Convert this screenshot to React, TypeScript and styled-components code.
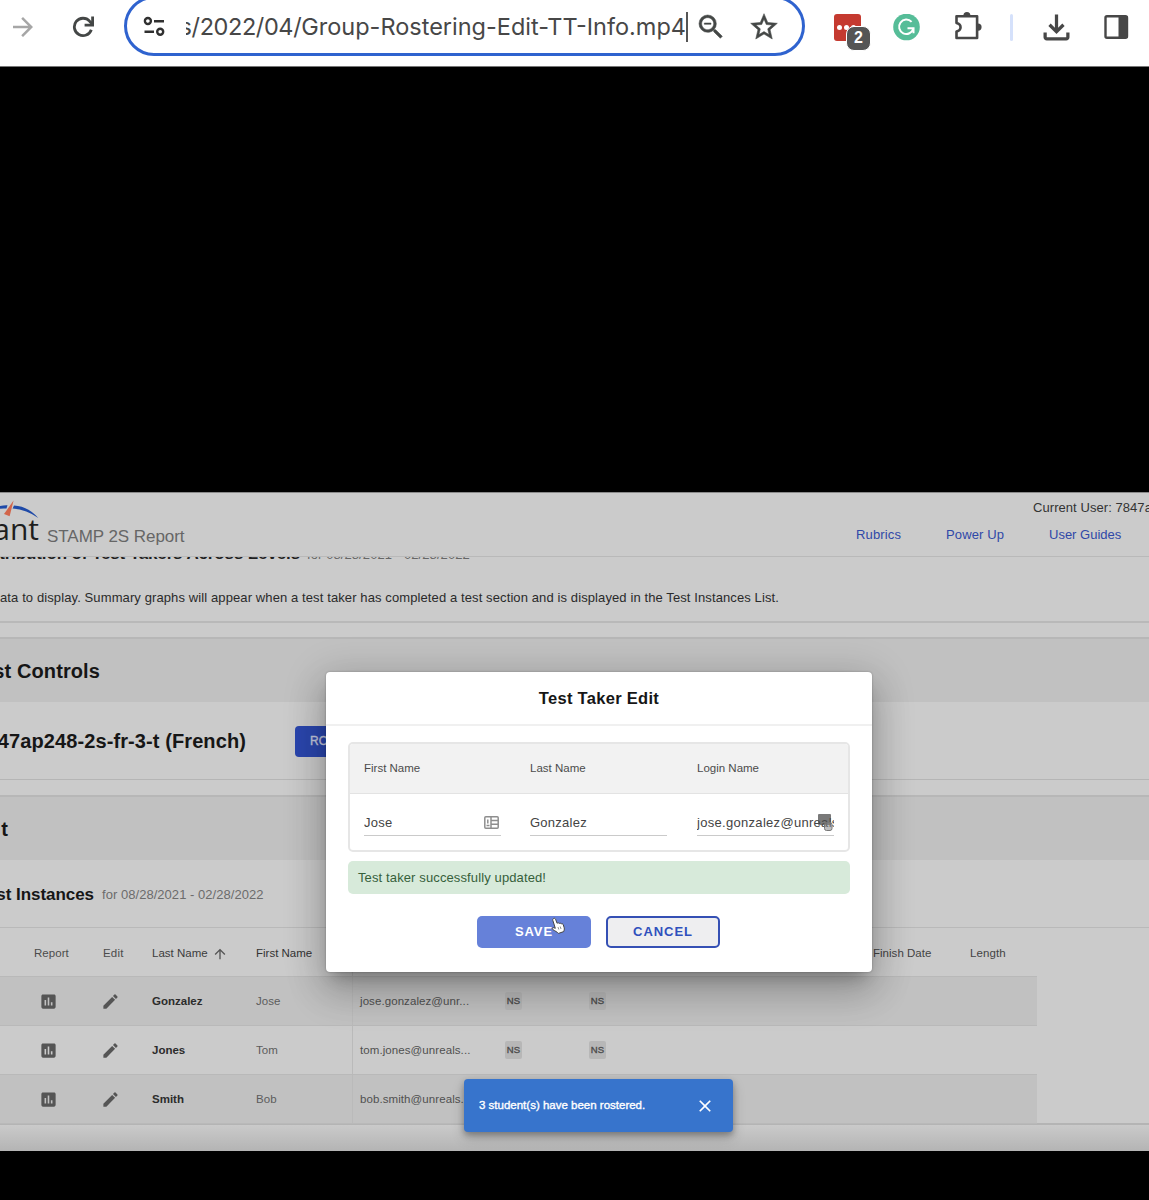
import React from "react";
import styled, { createGlobalStyle } from "styled-components";
import { MdArrowForward, MdArrowUpward, MdAssessment, MdClose, MdEdit, MdOutlineFileDownload, MdStarBorder, MdZoomOut } from "react-icons/md";

const Global = createGlobalStyle`
  *{box-sizing:border-box}
  body{margin:0;background:#000;overflow:hidden;font-family:"Liberation Sans",Arial,sans-serif}
`;
const Page = styled.div`width:1149px;height:1200px;display:flex;flex-direction:column;background:#000;overflow:hidden;`;
const Text = styled.span<{ $s: number; $c?: string; $b?: boolean; $ls?: number; $m?: boolean }>`
  font-size:${p => p.$s}px;color:${p => p.$c || "#1f1f1f"};font-weight:${p => (p.$b ? 700 : 400)};
  letter-spacing:${p => p.$ls || 0}px;white-space:nowrap;line-height:1.2;flex:none;
  ${p => (p.$m ? "-webkit-text-stroke:0.35px currentColor;" : "")}
`;

const Toolbar = styled.header`height:67px;flex:none;background:#fff;border-bottom:1px solid #777;display:flex;align-items:flex-start;`;
const NavIcon = styled.div<{ $w: number; $c?: string; $pl: number }>`
  width:${p => p.$w}px;padding-left:${p => p.$pl}px;height:54px;display:flex;align-items:center;color:${p => p.$c || "inherit"};flex:none;
  svg{display:block;flex:none}
`;
const Omnibox = styled.div`
  width:681px;height:60px;margin-top:-4px;flex:none;border:3px solid #2f63cf;border-radius:30px;display:flex;align-items:center;
  color:#444746;padding:1px 0 0 16px;
  svg{display:block;flex:none}
`;
const Url = styled.div`
  width:502px;margin-left:21px;height:30px;display:flex;justify-content:flex-end;align-items:center;overflow:hidden;border-right:2px solid #555;
  padding-top:1px;
  span{font-family:Inter,sans-serif}
`;
const UrlPath = styled.span`letter-spacing:-0.4px;`;
const OmniIcons = styled.div`
  display:flex;align-items:center;gap:21px;margin-left:7px;
  svg path:not([fill="none"]){stroke:currentColor;stroke-width:.4}
`;
const Ext = styled.div`display:flex;align-items:center;height:54px;color:#474747;svg{display:block;flex:none}`;
const PassBox = styled.div`position:relative;width:27px;height:27px;margin-left:29px;background:#c53a30;border-radius:3px;display:flex;align-items:center;padding-left:3px;gap:2px;`;
const Dot = styled.i`width:5px;height:5px;border-radius:50%;background:#fff;`;
const Count = styled.div`position:absolute;left:12px;top:12px;width:25px;height:25px;border-radius:8px;background:#555;border:1px solid #fff;display:flex;align-items:center;justify-content:center;`;
const ExtDivider = styled.i`width:3px;height:27px;border-radius:2px;background:#d5e1fb;margin:0 23.5px 0 28px;`;

const Stage = styled.main`height:425px;flex:none;`;
const Video = styled.section`position:relative;height:659px;flex:none;background:#cbcbcb;overflow:hidden;display:flex;flex-direction:column;`;
const Head = styled.div`height:65px;flex:none;border-top:1px solid #8a8a8a;border-bottom:1px solid #b9b9b9;display:flex;justify-content:space-between;`;
const Brand = styled.div`display:flex;svg{display:block}`;
const LogoBox = styled.div`width:47px;height:60px;position:relative;overflow:hidden;`;
const LogoText = styled.div`position:absolute;right:8px;top:18px;span{font-family:"Open Sans",sans-serif;font-weight:400}`;
const BrandTitle = styled.div`padding-top:34px;`;
const HeadRight = styled.div`width:293px;display:flex;flex-direction:column;`;
const UserLine = styled.div`padding:5px 0 0 177px;height:32px;`;
const Links = styled.nav`display:flex;`;
const LinkItem = styled.a<{ $w: number }>`width:${p => p.$w}px;flex:none;`;

const Hidden = styled.div`height:66px;flex:none;overflow:hidden;border-bottom:2px solid #b9b9b9;display:flex;flex-direction:column;justify-content:space-between;padding-bottom:15px;`;
const Clipped = styled.div`height:3px;display:flex;align-items:flex-end;overflow:hidden;`;
const ClipBold = styled.div`width:300px;display:flex;justify-content:flex-end;margin-bottom:-4px;`;
const ClipThin = styled.div`margin:0 0 -3px 7px;display:flex;`;
const RightEdge = styled.div<{ $w: number }>`width:${p => p.$w}px;display:flex;justify-content:flex-end;flex:none;`;
const Band = styled.div<{ $mt: number }>`height:65px;margin-top:${p => p.$mt}px;flex:none;background:#c1c1c1;border-top:2px solid #b7b7b7;display:flex;align-items:center;`;
const Course = styled.div`height:78px;flex:none;border-bottom:1px solid #b5b5b5;display:flex;align-items:center;`;
const RosterBtn = styled.div`margin:1px 0 0 49px;width:110px;height:31px;background:#2a46ad;border-radius:4px;display:flex;align-items:center;padding-left:15px;`;
const Instances = styled.div`height:68px;flex:none;border-bottom:1px solid #b9b9b9;display:flex;align-items:center;gap:8px;padding-top:3px;`;

const Table = styled.div`display:flex;flex-direction:column;flex:none;border-bottom:2px solid #b4b4b4;height:197px;`;
const Row = styled.div<{ $h: number; $alt?: boolean }>`
  width:1037px;height:${p => p.$h}px;flex:none;background:${p => (p.$alt ? "#c1c1c1" : "transparent")};border-bottom:1px solid #b9b9b9;
  display:grid;grid-template-columns:103px 49px 104px 96px 153px 84px 284px 97px 67px;align-items:center;color:#555;
`;
const Cell = styled.div<{ $pl?: number; $pt?: number; $line?: boolean }>`
  height:100%;display:flex;align-items:center;gap:4px;padding:${p => p.$pt || 0}px 0 0 ${p => p.$pl || 0}px;${p => (p.$line ? "border-left:1px solid #bababa;" : "")}
  svg{display:block;flex:none}
`;
const EditMark = styled.div`margin-left:-2px;`;
const Ns = styled.div`width:17px;height:18px;border-radius:2px;background:#b7b7b7;display:flex;align-items:center;justify-content:center;`;
const Foot = styled.div`flex:1;background:linear-gradient(#cacaca,#b4b4b4);`;

const Dialog = styled.div`
  position:absolute;left:326px;top:180px;width:546px;height:300px;background:#fff;border-radius:4px;display:flex;flex-direction:column;padding-bottom:24px;
  box-shadow:0 11px 15px -7px rgba(0,0,0,.24),0 20px 38px 3px rgba(0,0,0,.16),0 7px 40px 6px rgba(0,0,0,.14),0 0 2px rgba(0,0,0,.3);
`;
const DialogTitle = styled.div`width:100%;height:54px;flex:none;border-bottom:2px solid #f0f0f0;display:flex;align-items:center;justify-content:center;padding-top:2px;`;
const Form = styled.div`width:502px;height:110px;margin:16px 0 0 22px;flex:none;border:2px solid #e6e6e6;border-radius:5px;overflow:hidden;`;
const FormHead = styled.div`height:50px;background:#f2f2f2;border-bottom:1px solid #e3e3e3;display:grid;grid-template-columns:166px 167px 1fr;align-items:center;padding-left:14px;`;
const FormBody = styled.div`display:grid;grid-template-columns:166px 167px 1fr;padding:14px 0 0 14px;`;
const Field = styled.div`position:relative;width:137px;height:28px;border-bottom:1.5px solid #cacaca;display:flex;align-items:center;overflow:hidden;padding-top:3px;`;
const FieldIcon = styled.div<{ $r: number; $t: number }>`position:absolute;right:${p => p.$r}px;top:${p => p.$t}px;svg{display:block}`;
const Alert = styled.div`width:502px;height:33px;margin:9px 0 0 22px;flex:none;border-radius:5px;background:#d7eada;display:flex;align-items:center;padding:1px 0 0 10px;`;
const Actions = styled.div`display:flex;gap:15px;margin:22px 0 0 151px;`;
const Btn = styled.div<{ $ghost?: boolean }>`
  width:114px;height:32px;border-radius:5px;display:flex;align-items:center;justify-content:center;
  background:${p => (p.$ghost ? "#eeeef0" : "#6681d9")};border:${p => (p.$ghost ? "2px solid #3550b4" : "0")};
`;
const Cursor = styled.div`position:absolute;left:224px;top:245px;svg{display:block}`;
const Toast = styled.div`
  position:absolute;left:464px;top:587px;width:269px;height:53px;border-radius:4px;background:#3774cc;display:flex;align-items:center;justify-content:space-between;
  padding:0 18px 0 15px;box-shadow:0 3px 6px rgba(0,0,0,.3),0 6px 14px rgba(0,0,0,.16);svg{display:block}
`;

const Reload = () => (
  <svg width="23" height="22" viewBox="0 0 23 22" fill="none" stroke="currentColor" strokeWidth="2.8">
    <path d="M19.3 13.7A8.7 8.7 0 1 1 17.6 5.2L20.3 8" />
    <path d="M20.6.6v8.5H12.6" />
  </svg>
);
const Tune = () => (
  <svg width="22" height="22" viewBox="0 0 22 22" fill="none" stroke="#303030" strokeWidth="2.4">
    <circle cx="4.9" cy="5" r="3" /><path d="M11 5.2h10M1.5 15.8H11" /><circle cx="17.2" cy="15.8" r="3" />
  </svg>
);
const Grammar = () => (
  <svg width="27" height="27" viewBox="0 0 27 27" fill="none">
    <circle cx="13.5" cy="13" r="13.3" fill="#56bd98" />
    <path d="M18.6 7.9A7.2 7.2 0 1 0 20.3 14.500" stroke="#fff" strokeWidth="2" />
    <path d="M14.5 14.200h6v5" stroke="#fff" strokeWidth="2" />
  </svg>
);
const Puzzle = () => (
  <svg width="30" height="30" viewBox="0 0 30 30" fill="none">
    <path d="M3.5 4.3h20.6V26H3.5v-6.4c5.4-1.2 5.4-7.4 0-8.6z" stroke="#474747" strokeWidth="2.6" strokeLinejoin="round" />
    <path d="M10.4 3.5a3.5 3.5 0 0 1 7 0zM25 11.5a3.6 3.6 0 0 1 0 7.2z" fill="#474747" />
  </svg>
);
const Panel = () => (
  <svg width="25" height="25" viewBox="0 0 25 25"><rect x="1.5" y="1.2" width="21.5" height="21.5" rx="1.5" fill="none" stroke="#474747" strokeWidth="2.4" /><path d="M14.5 1h9v22h-9z" fill="#474747" /></svg>
);
const Arc = () => (
  <svg width="47" height="60" viewBox="0 0 47 60">
    <path d="M-6 14.500Q2 12 7.500 12.300L6.500 15.500Q0 15 -6 17zM14 12.500Q28 13.300 38.300 25Q27 17 12.600 15.600z" fill="#1f4aa8" />
    <path d="M13.6 7.5L9.6 23.3 4 21z" fill="#d2654a" />
  </svg>
);
const CardIcon = () => (
  <svg width="15" height="13" viewBox="0 0 15 13" fill="none" stroke="#8e8e8e" strokeWidth="1.5"><rect x=".8" y=".8" width="13.4" height="11.4" rx="1" /><path d="M7 1v11M7 4.500h7M7 8.200h7M3.800 3.500v4M2.500 9.500h3" /></svg>
);
const PassIcon = () => (
  <svg width="16" height="18" viewBox="0 0 16 18"><rect x="0" y="0" width="13" height="11" rx="1" fill="#4c4c4c" fillOpacity=".75" /><rect x="6.5" y="8.5" width="7.5" height="8" rx="2" fill="#8a8a8a" fillOpacity=".55" stroke="#777" /></svg>
);
const Hand = () => (
  <svg width="16" height="18" viewBox="0 0 16 18"><path d="M3.400 1.600c1-.7 2 0 2.300 1l1.400 3.700c.7-.8 1.800-.5 2.200.2.700-.6 1.700-.3 2 .4.900-.4 1.800 0 2 .9l.9 3c.4 1.800-.2 2.600-.5 3.800l-5.200 1.800C7.200 15 5 14 2.600 12.400c-1-.9 0-2 1.200-1.700l1.500.6L2.800 3.300c-.2-.7 0-1.400.6-1.700z" fill="#fff" stroke="#444" strokeWidth="1" /><path d="M8 10l.8 2.500M10.200 9.500l.8 2.500" stroke="#777" strokeWidth=".8" /></svg>
);

const rows = [
  { last: "Gonzalez", first: "Jose", mail: "jose.gonzalez@unr...", ns: true },
  { last: "Jones", first: "Tom", mail: "tom.jones@unreals...", ns: true },
  { last: "Smith", first: "Bob", mail: "bob.smith@unreals...", ns: false },
];

export default function App() {
  return (
    <Page>
      <Global />
      <Toolbar>
        <NavIcon $w={72} $pl={8} $c="#a6a6a6"><MdArrowForward size={30} /></NavIcon>
        <NavIcon $w={52} $pl={0} $c="#444746"><Reload /></NavIcon>
        <Omnibox>
          <Tune />
          <Url><Text $s={23.5} $c="#474747"><UrlPath>s/2022/04/</UrlPath>Group-Rostering-Edit-TT-Info.mp4</Text></Url>
          <OmniIcons><MdZoomOut size={32} /><MdStarBorder size={32} /></OmniIcons>
        </Omnibox>
        <Ext>
          <PassBox><Dot /><Dot /><Dot /><Count><Text $s={16} $b $c="#fff">2</Text></Count></PassBox>
          <NavIcon $w={59} $pl={32}><Grammar /></NavIcon>
          <NavIcon $w={62} $pl={32.5}><Puzzle /></NavIcon>
          <ExtDivider />
          <MdOutlineFileDownload size={39} />
          <NavIcon $w={60} $pl={28}><Panel /></NavIcon>
        </Ext>
      </Toolbar>
      <Stage />
      <Video>
        <Head>
          <Brand>
            <LogoBox><Arc /><LogoText><Text $s={30} $c="#1e1e1e">ant</Text></LogoText></LogoBox>
            <BrandTitle><Text $s={17} $c="#666" $ls={-0.05}>STAMP 2S Report</Text></BrandTitle>
          </Brand>
          <HeadRight>
            <UserLine><Text $s={13} $c="#333" $ls={0.06}>Current User: 7847a</Text></UserLine>
            <Links>
              <LinkItem $w={90}><Text $s={13} $c="#2f48a8" $ls={0.15}>Rubrics</Text></LinkItem>
              <LinkItem $w={103}><Text $s={13} $c="#2f48a8" $ls={0.12}>Power Up</Text></LinkItem>
              <LinkItem $w={100}><Text $s={13} $c="#2f48a8">User Guides</Text></LinkItem>
            </Links>
          </HeadRight>
        </Head>
        <Hidden>
          <Clipped>
            <ClipBold><Text $s={17} $b $ls={-0.13}>tribution of Test Takers Across Levels</Text></ClipBold>
            <ClipThin><Text $s={13} $c="#666" $ls={0.09}>for 08/28/2021 - 02/28/2022</Text></ClipThin>
          </Clipped>
          <RightEdge $w={779}><Text $s={13} $c="#2a2a2a" $ls={0.106}>ata to display. Summary graphs will appear when a test taker has completed a test section and is displayed in the Test Instances List.</Text></RightEdge>
        </Hidden>
        <Band $mt={14}><RightEdge $w={100}><Text $s={20} $b $c="#161616" $ls={0.1}>st Controls</Text></RightEdge></Band>
        <Course>
          <RightEdge $w={246}><Text $s={20} $b $c="#161616" $ls={0.1}>47ap248-2s-fr-3-t (French)</Text></RightEdge>
          <RosterBtn><Text $s={12} $m $c="#c3c8dc">ROSTER</Text></RosterBtn>
        </Course>
        <Band $mt={15}><RightEdge $w={8}><Text $s={20} $b $c="#161616">t</Text></RightEdge></Band>
        <Instances>
          <RightEdge $w={94}><Text $s={17} $b $c="#161616" $ls={-0.05}>st Instances</Text></RightEdge>
          <Text $s={13} $c="#6c6c6c" $ls={0.04}>for 08/28/2021 - 02/28/2022</Text>
        </Instances>
        <Table>
          <Row $h={49}>
            <Cell $pl={34} $pt={3}><Text $s={11.5} $c="#4c4c4c" $ls={0.05}>Report</Text></Cell>
            <Cell $pt={3}><Text $s={11.5} $c="#4c4c4c" $ls={0.2}>Edit</Text></Cell>
            <Cell $pt={3}><Text $s={11.5} $c="#3c3c3c">Last Name</Text><MdArrowUpward size={16} /></Cell>
            <Cell $pt={3}><Text $s={11.5} $c="#333">First Name</Text></Cell>
            <Cell $line /><Cell /><Cell />
            <Cell $pt={3}><Text $s={11.5} $c="#444" $ls={0.02}>Finish Date</Text></Cell>
            <Cell $pt={3}><Text $s={11.5} $c="#444" $ls={0.08}>Length</Text></Cell>
          </Row>
          {rows.map((r, i) => (
            <Row key={r.last} $h={49} $alt={i % 2 === 0}>
              <Cell $pl={39}><MdAssessment size={19} /></Cell>
              <Cell><EditMark><MdEdit size={19} /></EditMark></Cell>
              <Cell $pt={1}><Text $s={11.5} $b $c="#2c2c2c">{r.last}</Text></Cell>
              <Cell $pt={1}><Text $s={11.5} $c="#5c5c5c" $ls={0.05}>{r.first}</Text></Cell>
              <Cell $line $pl={7} $pt={1}><Text $s={11.5} $c="#505050" $ls={0.08}>{r.mail}</Text></Cell>
              <Cell>{r.ns && <Ns><Text $s={9.5} $m $c="#4c4c4c" $ls={0.1}>NS</Text></Ns>}</Cell>
              <Cell>{r.ns && <Ns><Text $s={9.5} $m $c="#4c4c4c" $ls={0.1}>NS</Text></Ns>}</Cell>
              <Cell /><Cell />
            </Row>
          ))}
        </Table>
        <Foot />
        <Dialog>
          <DialogTitle><Text $s={16.5} $b $c="#161616" $ls={0.3}>Test Taker Edit</Text></DialogTitle>
          <Form>
            <FormHead>
              <Text $s={11.5} $c="#4c4c4c">First Name</Text>
              <Text $s={11.5} $c="#4c4c4c">Last Name</Text>
              <Text $s={11.5} $c="#4c4c4c">Login Name</Text>
            </FormHead>
            <FormBody>
              <Field><Text $s={13} $c="#444" $ls={0.25}>Jose</Text><FieldIcon $r={2} $t={8}><CardIcon /></FieldIcon></Field>
              <Field><Text $s={13} $c="#444" $ls={0.25}>Gonzalez</Text></Field>
              <Field><Text $s={13} $c="#444" $ls={0.3}>jose.gonzalez@unreals</Text><FieldIcon $r={0} $t={6}><PassIcon /></FieldIcon></Field>
            </FormBody>
          </Form>
          <Alert><Text $s={13} $c="#36603a" $ls={0.12}>Test taker successfully updated!</Text></Alert>
          <Actions>
            <Btn><Text $s={13} $b $c="#fff" $ls={0.85}>SAVE</Text></Btn>
            <Btn $ghost><Text $s={13} $b $c="#2f50bd" $ls={0.95}>CANCEL</Text></Btn>
          </Actions>
          <Cursor><Hand /></Cursor>
        </Dialog>
        <Toast><Text $s={11.5} $m $c="#fff">3 student(s) have been rostered.</Text><MdClose size={20} color="#fff" /></Toast>
      </Video>
    </Page>
  );
}
